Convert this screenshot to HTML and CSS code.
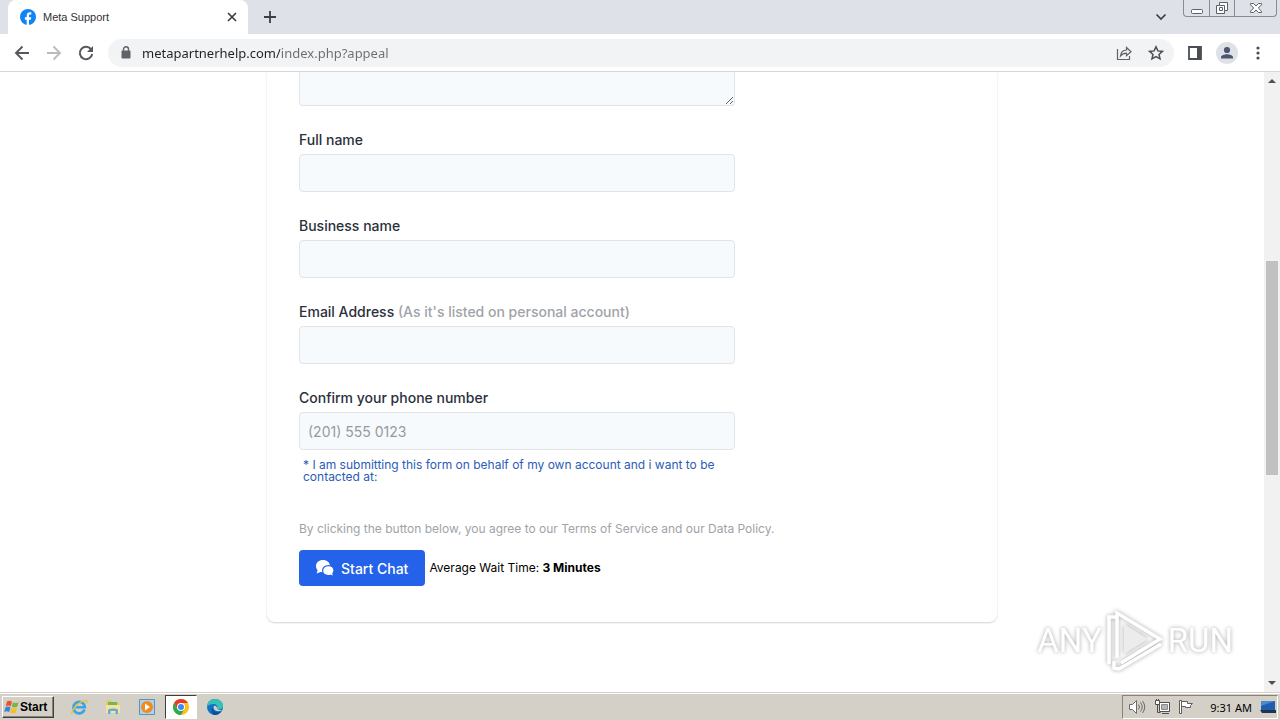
FILE: index.html
```html
<!DOCTYPE html>
<html lang="en">
<head>
    <meta charset="UTF-8">
    <meta name="viewport" content="width=device-width, initial-scale=1.0">
    <title>Meta Support</title>
    <link rel="stylesheet" href="styles.css">
</head>
<body>
    <!-- Browser tabs -->
    <header class="tab-strip">
        <div class="tab">
            <svg class="favicon" viewBox="0 0 16 16" width="16" height="16">
                <circle cx="8" cy="8" r="8" fill="#1184f5"/>
                <path d="M6.7 16v-5.3H4.9V8.2h1.8V6.9c0-2.6 1.2-3.7 3.3-3.7.5 0 1 .1 1.3.1v2.2h-1c-1 0-1.3.5-1.3 1.3v1.4h2.2l-.4 2.5H9V16z" fill="#fff"/>
            </svg>
            <span class="tab-title">Meta Support</span>
            <button class="icon-btn tab-close" aria-label="Close tab">
                <svg viewBox="0 0 10 10" width="10" height="10"><path d="M1 1l8 8M9 1L1 9" stroke="#3c4043" stroke-width="1.7"/></svg>
            </button>
        </div>
        <button class="icon-btn new-tab" aria-label="New tab">
            <svg viewBox="0 0 12 12" width="12" height="12"><path d="M6 0v12M0 6h12" stroke="#3c4043" stroke-width="1.8"/></svg>
        </button>
        <button class="icon-btn tab-search" aria-label="Search tabs">
            <svg viewBox="0 0 12 8" width="12" height="8"><path d="M1.5 1.5L6 6l4.5-4.5" fill="none" stroke="#3c4043" stroke-width="1.7"/></svg>
        </button>
        <div class="window-controls">
            <button aria-label="Minimize">
                <svg viewBox="0 0 14 14" width="14" height="14"><rect x="1.5" y="8.5" width="11" height="4" rx="1" fill="#fff" stroke="#5b6069"/></svg>
            </button>
            <button aria-label="Restore">
                <svg viewBox="0 0 14 14" width="14" height="14"><path d="M4.500 1.500h8v8h-3v3h-8v-8h3z" fill="#fff" stroke="#5b6069"/><path d="M4.500 4.500h5v5M4.500 6.500h3v3h-3z" fill="none" stroke="#5b6069"/></svg>
            </button>
            <button class="wide" aria-label="Close window">
                <svg viewBox="0 0 14 14" width="14" height="14"><path d="M1.500 2.500h3L7 5l2.500-2.500h3v1.300L9.300 7l3.200 3.200v1.300h-3L7 9l-2.500 2.500h-3v-1.300L4.700 7 1.500 3.800z" fill="#fff" stroke="#5b6069"/></svg>
            </button>
        </div>
    </header>

    <!-- Address bar -->
    <div class="toolbar">
        <nav class="nav-group">
            <button class="icon-btn nav-btn" aria-label="Back">
                <svg viewBox="0 0 16 16" width="16" height="16"><path d="M15 8H2M8.500 1.500L2 8l6.500 6.500" fill="none" stroke="#55585d" stroke-width="1.900"/></svg>
            </button>
            <button class="icon-btn nav-btn" aria-label="Forward">
                <svg viewBox="0 0 16 16" width="16" height="16"><path d="M1 8h13M7.500 1.500L14 8l-6.500 6.500" fill="none" stroke="#b9bbbe" stroke-width="1.900"/></svg>
            </button>
            <button class="icon-btn nav-btn" aria-label="Reload">
                <svg viewBox="0 0 16 16" width="16" height="16"><path d="M13.300 4.600A6.200 6.200 0 1 0 14.200 9" fill="none" stroke="#55585d" stroke-width="2"/><path d="M15 1v6H9z" fill="#55585d"/></svg>
            </button>
        </nav>
        <div class="omnibox">
            <svg viewBox="0 0 10 13" width="10" height="13"><rect x="0.500" y="4.500" width="9" height="8" rx="1" fill="#5f6368"/><path d="M2.500 5V3.300a2.500 2.500 0 0 1 5 0V5" fill="none" stroke="#5f6368" stroke-width="1.400"/></svg>
            <input class="url" type="text" aria-label="Address" value="metapartnerhelp.com/index.php?appeal">
            <button class="icon-btn" aria-label="Share this page">
                <svg viewBox="0 0 16 16" width="16" height="16"><path d="M1.500 4v10.500h12V11M4.500 11c.3-4 2.200-5.800 6-6V2.500L15 6.700l-4.500 4V8.200c-2.800 0-4.500.8-6 2.800z" fill="none" stroke="#5f6368" stroke-width="1.200"/></svg>
            </button>
            <button class="icon-btn" aria-label="Bookmark this tab">
                <svg viewBox="0 0 16 16" width="16" height="16"><path d="M8 1.800l1.900 4.100 4.500.5-3.400 3 1 4.400L8 11.500l-4 2.300 1-4.400-3.400-3 4.500-.5z" fill="none" stroke="#4b4f54" stroke-width="1.500"/></svg>
            </button>
        </div>
        <div class="menu-group">
            <button class="icon-btn" aria-label="Side panel">
                <svg viewBox="0 0 14 14" width="14" height="14"><path d="M1 1h12v12H1z" fill="none" stroke="#4b4f54" stroke-width="1.800"/><path d="M9 1h4v12H9z" fill="#4b4f54"/></svg>
            </button>
            <button class="icon-btn" aria-label="Profile">
                <svg viewBox="0 0 22 22" width="22" height="22"><circle cx="11" cy="11" r="11" fill="#dee1e6"/><circle cx="11" cy="8" r="3.100" fill="#4c5670"/><path d="M5 16.500v-1.300c0-2 3.500-3 6-3s6 1 6 3v1.300z" fill="#4c5670"/></svg>
            </button>
            <button class="icon-btn menu-btn" aria-label="Menu">
                <svg viewBox="0 0 4 14" width="4" height="14" fill="#4b4f54"><circle cx="2" cy="2" r="1.600"/><circle cx="2" cy="7" r="1.600"/><circle cx="2" cy="12" r="1.600"/></svg>
            </button>
        </div>
    </div>

    <div class="viewport">
        <main class="page">
            <form class="card" onsubmit="return false">
                <div class="field">
                    <textarea class="control message" aria-label="Message"></textarea>
                </div>
                <div class="field">
                    <label for="fullName">Full name</label>
                    <input class="control" type="text" id="fullName">
                </div>
                <div class="field">
                    <label for="businessName">Business name</label>
                    <input class="control" type="text" id="businessName">
                </div>
                <div class="field">
                    <label for="email">Email Address <span class="muted">(As it's listed on personal account)</span></label>
                    <input class="control" type="text" id="email">
                </div>
                <div class="field">
                    <label for="phone">Confirm your phone number</label>
                    <input class="control" type="text" id="phone" placeholder="(201) 555 0123">
                    <p class="note">* I am submitting this form on behalf of my own account and i want to be contacted at:</p>
                </div>
                <p class="terms">By clicking the button below, you agree to our Terms of Service and our Data Policy.</p>
                <div class="actions">
                    <button class="chat-btn">
                        <svg viewBox="0 0 18 17" width="18" height="17">
                            <path d="M7 0C3 0 0 2.600 0 6c0 1.600.6 2.900 1.600 4L.6 13.500 4.500 12c.8.200 1.700.200 2.500.100C11 12 14 9.400 14 6S11 0 7 0z" fill="#fff"/>
                            <path d="M12.300 5.600C9 5.600 6.600 7.800 6.600 10.600s2.500 4.900 5.700 4.900c.7 0 1.400-.1 2-.3l3.300 1.300-.7-3c.7-.8 1.100-1.800 1.100-2.900 0-2.800-2.400-5-5.700-5z" fill="#fff" stroke="#2362e9" stroke-width="1.200"/>
                        </svg>
                        Start Chat
                    </button>
                    <span class="wait">Average Wait Time: <b>3 Minutes</b></span>
                </div>
            </form>
        </main>
        <div class="scrollbar">
            <svg viewBox="0 0 16 17" width="16" height="17"><path d="M4 11l4-4 4 4z" fill="#505050"/></svg>
            <div class="scroll-before"></div>
            <div class="scroll-thumb"></div>
            <div class="scroll-after"></div>
            <svg viewBox="0 0 16 17" width="16" height="17"><path d="M4 6l4 4 4-4z" fill="#505050"/></svg>
        </div>
        <div class="watermark">
            <span>ANY</span>
            <svg viewBox="0 0 58 64" width="58" height="64">
                <g fill="none" stroke="#fff" stroke-width="3.500">
                    <path d="M10 9H3v47"/>
                    <path d="M11 50V5l43 26-39 24"/>
                    <path d="M18 16v30l24-15z" fill="#ececec" stroke="none"/>
                    <path d="M8 53v7l5 1 42-25"/>
                </g>
            </svg>
            <span>RUN</span>
        </div>
    </div>

    <!-- Windows taskbar -->
    <footer class="taskbar">
        <button class="start-btn">
            <svg viewBox="0 0 16 16" width="16" height="16">
                <path d="M3 2.500c2-1 3.500-.8 5 .2L6.800 7.300c-1.500-1-3-1.100-5-.2z" fill="#e8532a"/>
                <path d="M9 3.200c1.700 1 3.400 1 5.600 0l-1.400 4.600c-2 1-3.700.9-5.400-.1z" fill="#7bb63a"/>
                <path d="M1.500 8.200c2-.9 3.500-.8 5 .2l-1.300 4.700c-1.500-1-3-1.100-5-.2z" fill="#3a82d2"/>
                <path d="M7.500 8.900c1.700 1 3.400 1 5.400.1l-1.300 4.700c-2 .9-3.700.8-5.400-.2z" fill="#f6bd25"/>
            </svg>
            Start
        </button>
        <div class="quick-launch">
            <button aria-label="Internet Explorer">
                <svg viewBox="0 0 18 18" width="18" height="18"><path d="M14.500 11.500a5.700 5.700 0 1 1 .3-2.200H5" fill="none" stroke="#3ba4e4" stroke-width="2.600"/><path d="M2.300 16c-3-3 10-15 14-13.500 1 .4.900 1.600.2 3" fill="none" stroke="#ecc23c" stroke-width="1.400"/></svg>
            </button>
            <button aria-label="Explorer">
                <svg viewBox="0 0 18 18" width="18" height="18"><path d="M2 3l5-1 1 2h7v11H2z" fill="#e6c95f"/><path d="M4 4h9v3H4z" fill="#72b65b"/><path d="M2 7h14v8H2z" fill="#f4e39a"/><path d="M4 16v-4c0-2 10-2 10 0v4h-2.500v-3h-5v3z" fill="#67acd9"/></svg>
            </button>
            <button aria-label="Media Player">
                <svg viewBox="0 0 18 18" width="18" height="18"><path d="M1.500 1.500h15v15h-15z" fill="#a9d3ef" stroke="#5b93bd"/><circle cx="9" cy="9" r="6" fill="#f28a1c"/><path d="M7 5.500l5 3.500-5 3.500z" fill="#fff"/></svg>
            </button>
            <button class="active" aria-label="Chrome">
                <svg viewBox="0 0 18 18" width="18" height="18"><circle cx="9" cy="9" r="8" fill="#fbc116"/><path d="M2.070 5A8 8 0 0 1 15.930 5H9L5.500 11z" fill="#e33b2e"/><path d="M2.070 5A8 8 0 0 0 9 17l3.460-6H5.500z" fill="#2da94f"/><circle cx="9" cy="9" r="4" fill="#fff"/><circle cx="9" cy="9" r="3" fill="#4285f4"/></svg>
            </button>
            <button aria-label="Edge">
                <svg viewBox="0 0 18 18" width="18" height="18"><circle cx="9" cy="9" r="8" fill="#1372c4"/><path d="M1 9C1 4 4.500 1 9 1c5 0 8 3 8 6.500 0 2.500-2 4-4 4-1.500 0-2.500-.5-2-1.500.8-2-.5-4-3-4C4.500 6 2 7 1 9z" fill="#35c1b4"/><path d="M6.500 9.500c0 3.500 3 5.500 8 4-1 2-3 3.500-5.500 3.500-3 0-4.500-5-2.500-7.500z" fill="#0d4f9c"/><path d="M8 8c-1 2 0 4.500 3 5 2 .4 4-.2 5-1-1 .3-5 .2-5-2 0-1.500-2-3-3-2z" fill="#d4cfc7"/></svg>
            </button>
        </div>
        <div class="tray">
            <svg viewBox="0 0 18 16" width="18" height="16" stroke="#6b6b6b" fill="none"><path d="M1.500 5.500h3l4-4v13l-4-4h-3z" fill="#fff"/><path d="M10.500 5.500q2 2.500 0 5M12.500 3.500q3.500 4.500 0 9M14.500 2q4.500 6 0 12"/></svg>
            <svg viewBox="0 0 16 16" width="16" height="16" stroke="#4f4f4f" fill="#fff"><path d="M5.500 3.500h10v9h-10z"/><path d="M7.500 5.500h6v5h-6z" fill="#b5b5b5" stroke="#888"/><path d="M1.500 1.500h4v4h-4z"/><path d="M3.500 5.500v8h3M8 14.500h7M2.500 0v2M4.500 0v2" fill="none"/></svg>
            <svg viewBox="0 0 16 16" width="16" height="16" stroke="#5e5e5e" fill="#fff"><path d="M1.500 1.500h2v13h-2zM3.500 2.500h6v2h5l-2 2 0 2h-5v-1h-4z"/></svg>
            <time>9:31 AM</time>
            <svg viewBox="0 0 16 14" width="16" height="14"><path d="M1 1h14v9H1z" fill="#1f5fae"/><path d="M1 1h14L1 6z" fill="#4a8bd0"/><path d="M0 10h16v3H2z" fill="#20344f"/></svg>
        </div>
    </footer>
</body>
</html>
```
FILE: styles.css
```css
* {
    margin: 0;
    padding: 0;
    box-sizing: border-box;
}

body {
    display: flex;
    flex-direction: column;
    height: 100vh;
    overflow: hidden;
    background: #fff;
    font-family: Inter, "Liberation Sans", sans-serif;
    font-size: 14px;
}

button {
    border: none;
    background: none;
    font: inherit;
    cursor: pointer;
}

svg {
    display: block;
    flex: none;
}

/* Browser tabs */
.tab-strip {
    display: flex;
    flex: none;
    height: 34px;
    padding-left: 8px;
    background: #dee1e8;
}

.tab {
    display: flex;
    align-items: center;
    gap: 7px;
    width: 240px;
    padding: 0 10px 0 12px;
    background: #fff;
    border-radius: 8px 8px 0 0;
}

.tab-title {
    flex: 1;
    font-family: "Liberation Sans", sans-serif;
    font-size: 11px;
    color: #303236;
}

.icon-btn {
    display: flex;
    align-items: center;
    justify-content: center;
}

.tab-close {
    width: 12px;
}

.new-tab {
    width: 28px;
    margin-left: 8px;
}

.tab-search {
    width: 28px;
    margin-left: auto;
}

.window-controls {
    display: flex;
    height: 17px;
    margin: 0 3px 0 8px;
    border: 1px solid #868b94;
    border-top: none;
    border-radius: 0 0 4px 4px;
}

.window-controls button {
    display: flex;
    align-items: center;
    justify-content: center;
    width: 25px;
}

.window-controls button + button {
    border-left: 1px solid #868b94;
}

.window-controls .wide {
    width: 42px;
}

/* Address bar */
.toolbar {
    display: flex;
    flex: none;
    align-items: center;
    gap: 14px;
    height: 38px;
    padding: 0 16px 0 14px;
    border-bottom: 1px solid #d5d7da;
}

.nav-group {
    display: flex;
    gap: 16px;
}

.nav-btn {
    width: 16px;
}

.menu-group {
    display: flex;
    align-items: center;
    gap: 14px;
}

.menu-btn {
    width: 12px;
}

.omnibox {
    display: flex;
    flex: 1;
    align-items: center;
    gap: 16px;
    height: 28px;
    padding: 0 10px 0 13px;
    background: #f1f3f4;
    border-radius: 14px;
}

.url {
    flex: 1;
    margin-left: -5px;
    border: none;
    outline: none;
    font-family: "Noto Sans", sans-serif;
    font-size: 13px;
    background: linear-gradient(90deg, #202124 138px, #6a6e73 138px);
    -webkit-background-clip: text;
    background-clip: text;
    color: transparent;
}

/* Page */
.viewport {
    position: relative;
    display: flex;
    flex: 1;
    min-height: 0;
}

.page {
    flex: 1;
    padding: 0 20px;
    overflow: hidden;
}

.card {
    max-width: 730px;
    margin: 0 auto;
    padding: 0 32px 36px;
    border-radius: 0 0 8px 8px;
    box-shadow: 0 1px 2px rgba(0, 0, 0, 0.18);
}

.field {
    max-width: 436px;
    margin-bottom: 24px;
}

.field label {
    display: block;
    margin-bottom: 4px;
    font-weight: 500;
    line-height: 20px;
    color: #2b303b;
}

.field .muted {
    color: #a0a3a8;
}

.control {
    display: block;
    width: 100%;
    height: 38px;
    padding: 0 8px;
    background: #f7fafd;
    border: 1px solid #e1e4e8;
    border-radius: 4px;
    outline: none;
    font: inherit;
}

.control::placeholder {
    color: #96999e;
}

.message {
    height: 34px;
    border-top: none;
    border-radius: 0 0 4px 4px;
}

.note {
    padding: 9px 4px 12px;
    font-size: 12px;
    line-height: 12px;
    color: #2c5cb8;
}

.terms {
    margin-bottom: 11px;
    font-size: 12px;
    line-height: 20px;
    color: #a0a3a8;
}

.actions {
    display: flex;
    align-items: center;
    gap: 4px;
}

.chat-btn {
    display: flex;
    align-items: center;
    gap: 7px;
    height: 36px;
    padding: 0 17px;
    background: #2362e9;
    border-radius: 4px;
    font-weight: 500;
    color: #fff;
}

.wait {
    padding-bottom: 2px;
    font-size: 12px;
    color: #000;
}

.scrollbar {
    display: flex;
    flex-direction: column;
    width: 16px;
    background: #f1f1f1;
}

.scroll-before {
    flex: 172;
}

.scroll-thumb {
    flex: 214;
    margin: 0 2px;
    background: #c1c1c1;
}

.scroll-after {
    flex: 200;
}

.watermark {
    position: absolute;
    right: 47px;
    bottom: 20px;
    display: flex;
    align-items: center;
    gap: 4px;
    font-family: Roboto, sans-serif;
    font-size: 33px;
    color: #fff;
    filter: drop-shadow(0 0 2px rgba(0, 0, 0, 0.35));
    pointer-events: none;
}

/* Taskbar */
.taskbar {
    display: flex;
    flex: none;
    align-items: stretch;
    height: 28px;
    padding: 2px 2px 1px;
    background: #d4cfc7;
    border-top: 1px solid #d4cfc7;
    box-shadow: inset 0 1px #fff;
}

.start-btn {
    display: flex;
    align-items: center;
    width: 52px;
    margin: 1px 0;
    padding: 0 1px;
    border: 1px solid;
    border-color: #fff #404040 #404040 #fff;
    box-shadow: inset -1px -1px #87837c;
    font-family: "Liberation Sans", sans-serif;
    font-size: 12px;
    font-weight: bold;
}

.quick-launch {
    display: flex;
    gap: 2px;
    margin-left: 9px;
}

.quick-launch button {
    display: flex;
    align-items: center;
    justify-content: center;
    width: 32px;
}

.quick-launch .active {
    background: #fff;
    border: 1px solid;
    border-color: #404040 #fff #fff #404040;
}

.tray {
    display: flex;
    align-items: center;
    gap: 8px;
    margin-left: auto;
    padding: 0 1px 0 5px;
    border: 1px solid;
    border-color: #87837c #fff #fff #87837c;
}

.tray time {
    margin-left: 8px;
    font-family: "Noto Sans", sans-serif;
    font-size: 11px;
    color: #000;
}
```
